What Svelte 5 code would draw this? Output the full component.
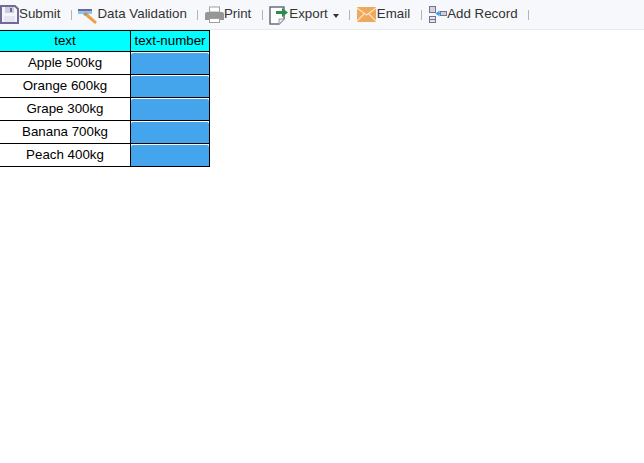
<script lang="ts">
  const rows = ["Apple 500kg", "Orange 600kg", "Grape 300kg", "Banana 700kg", "Peach 400kg"];
</script>

<div class="toolbar">
  <button class="tool">
    <svg width="19" height="19" viewBox="0 0 19 19">
      <path d="M1 1h14l3 3v14H1z" fill="#f4f4fa" stroke="#6f6a96" stroke-width="2" />
      <rect x="5" y="2" width="9" height="6" fill="#c9cce0" />
      <rect x="10" y="3" width="2" height="4" fill="#6f6a96" />
      <rect x="4" y="11" width="11" height="6" fill="#e4e5f1" />
    </svg>
    <span>Submit</span>
  </button>
  <i class="sep"></i>
  <button class="tool">
    <svg width="19" height="19" viewBox="0 0 19 19">
      <rect x="0" y="4" width="14" height="2" fill="#6a6a9a" />
      <rect x="0" y="6" width="14" height="3" fill="#8fc4ea" />
      <path d="M5 9l3-2 11 10-2 2z" fill="#f0a040" />
      <path d="M5 9l3-2 2 2-3 2z" fill="#9a9a9a" />
    </svg>
    <span>Data Validation</span>
  </button>
  <i class="sep"></i>
  <button class="tool">
    <svg width="19" height="19" viewBox="0 0 19 19">
      <rect x="4.500" y="2" width="10" height="5" fill="#fff" stroke="#a0a0a0" />
      <path d="M0 9q0-2 2-2h15q2 0 2 2v6h-4v-2H4v2H0z" fill="#969696" />
      <rect x="4.500" y="13.500" width="10" height="4" fill="#fff" stroke="#a0a0a0" />
    </svg>
    <span>Print</span>
  </button>
  <i class="sep"></i>
  <button class="tool">
    <svg width="20" height="20" viewBox="0 0 20 20">
      <path d="M1 2h14v12l-5 5H1z" fill="#fff" stroke="#6f6a7e" stroke-width="1.500" />
      <path d="M10 19v-5h5" fill="#eee" stroke="#9a9a9a" />
      <path d="M7 6h6V3l6 4.500-6 4.500V9H7z" fill="#2f8a4e" />
    </svg>
    <span>Export</span>
    <i class="caret"></i>
  </button>
  <i class="sep"></i>
  <button class="tool email">
    <svg width="19" height="15" viewBox="0 0 19 15">
      <rect width="19" height="15" rx="1" fill="#f0a95c" />
      <path d="M0 1l9.500 7L19 1M0 14l7-7M19 14l-7-7" fill="none" stroke="#fbe3c4" stroke-width="1.200" />
    </svg>
    <span>Email</span>
  </button>
  <i class="sep"></i>
  <button class="tool">
    <svg width="19" height="19" viewBox="0 0 19 19">
      <rect x="1.500" y="1.500" width="6" height="6" fill="#d3d2e0" stroke="#77708f" />
      <rect x="1.500" y="11.500" width="6" height="6" fill="#e6e5ee" stroke="#77708f" />
      <path d="M2 14.500h5" stroke="#77708f" />
      <rect x="12.500" y="6.500" width="6" height="4" fill="#cfd0de" stroke="#77708f" />
      <path d="M7.500 8.500l4-3v2h1v2h-1v2z" fill="#3da3e8" />
    </svg>
    <span>Add Record</span>
  </button>
  <i class="sep"></i>
</div>

<table>
  <thead>
    <tr>
      <th class="name">text</th>
      <th class="value">text-number</th>
    </tr>
  </thead>
  <tbody>
    {#each rows as row}
      <tr>
        <td class="name">{row}</td>
        <td class="value"><div class="fill"></div></td>
      </tr>
    {/each}
  </tbody>
</table>

<style>
  :global(body) {
    background: #fff;
    font-family: "Liberation Sans", Arial, sans-serif;
  }

  .toolbar {
    display: flex;
    align-items: center;
    height: 29px;
    background: #f7f8fb;
    border-bottom: 1px solid #e9eaec;
    overflow: hidden;
  }

  .tool {
    display: flex;
    align-items: center;
    padding: 0;
    border: 0;
    background: none;
    font: 13.33px "Liberation Sans", Arial, sans-serif;
    color: #333;
  }

  .tool span {
    padding-bottom: 2px;
  }

  .email svg {
    margin-right: 1px;
  }

  .sep {
    width: 1px;
    height: 10px;
    margin: 0 6.5px 0 10.5px;
    background: #b5b5b5;
  }

  .caret {
    width: 0;
    height: 0;
    margin: 2px 0 0 5px;
    border: 3.500px solid transparent;
    border-top: 4px solid #333;
    border-bottom: 0;
  }

  table {
    margin-left: -1px;
    border-collapse: collapse;
    table-layout: fixed;
    width: 210px;
    font-size: 13.33px;
    color: #000;
  }

  th,
  td {
    height: 20px;
    padding: 0 0 2px;
    border: 1px solid #000;
    font-weight: 400;
    text-align: center;
  }

  th {
    height: 18px;
    background: #0ff;
  }

  .name {
    width: 130px;
  }

  .value {
    width: 78px;
  }

  td.value {
    height: 21px;
    padding: 1px 0 0;
    vertical-align: top;
  }

  .fill {
    height: 21px;
    background: #44a5ec;
    border-radius: 2px 2px 0 0;
  }
</style>
